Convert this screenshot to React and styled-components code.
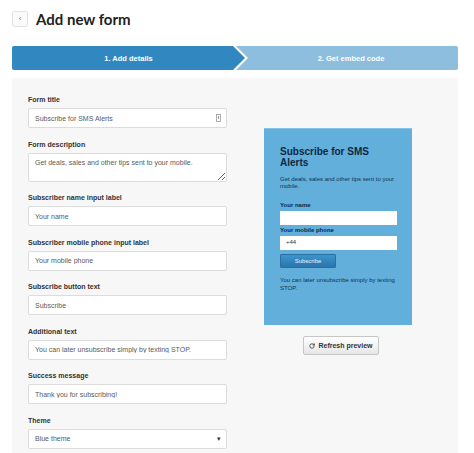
import React from "react";
import styled, { createGlobalStyle } from "styled-components";
import { RotateCw } from "lucide-react";

const GlobalStyle = createGlobalStyle`
  body {
    margin: 0;
    background: #fff;
    font-family: "Liberation Sans", Arial, sans-serif;
    overflow: hidden;
  }
`;

const Page = styled.div`
  padding: 11px 16px 0 12px;
`;

const Header = styled.div`
  display: flex;
  align-items: center;
  gap: 8px;
  height: 16px;
`;

const BackButton = styled.button`
  width: 16px;
  height: 16px;
  padding: 0;
  border: 1px solid #e2e2e2;
  border-radius: 2px;
  background: #fafafa;
  color: #777;
  font-size: 8px;
  line-height: 14px;
  font-family: "Liberation Sans", Arial, sans-serif;
`;

const Title = styled.h1`
  margin: 0;
  font-family: Lato, "Liberation Sans", sans-serif;
  font-weight: 700;
  font-size: 15px;
  line-height: 16px;
  color: #222;
`;

const Stepper = styled.div`
  display: flex;
  height: 24px;
  margin-top: 19px;
`;

const Step = styled.div`
  display: flex;
  align-items: center;
  justify-content: center;
  color: #fff;
  font-weight: 700;
  font-size: 7.5px;
  background: ${(p) => (p.$active ? "#3187bf" : "#8dbedd")};
  ${(p) =>
    p.$active
      ? `
    width: 233px;
    border-radius: 2px 0 0 2px;
    clip-path: polygon(0 0, calc(100% - 12px) 0, 100% 50%, calc(100% - 12px) 100%, 0 100%);
  `
      : `
    flex: 1;
    margin-left: -9px;
    padding-left: 8px;
    border-radius: 0 2px 2px 0;
    clip-path: polygon(0 0, 100% 0, 100% 100%, 0 100%, 12px 50%);
  `}
`;

const Panel = styled.div`
  margin-top: 8px;
  background: #f7f7f7;
  padding: 17px 16px 20px;
  display: grid;
  grid-template-columns: 199px 1fr;
`;

const FormColumn = styled.div`
  display: flex;
  flex-direction: column;
  gap: 11.5px;
`;

const Field = styled.div`
  display: flex;
  flex-direction: column;
`;

const Label = styled.label`
  display: block;
  font-size: 7px;
  font-weight: 700;
  line-height: 9px;
  color: #333;
  margin-bottom: 4px;
`;

const InputWrap = styled.div`
  position: relative;
`;

const TextInput = styled.input`
  display: block;
  box-sizing: border-box;
  width: 199px;
  height: 20px;
  margin: 0;
  border: 1px solid #dcdcdc;
  border-radius: 2px;
  padding: 0 6px;
  background: #fff;
  color: #5a5a5a;
  font-family: "Liberation Sans", Arial, sans-serif;
  font-size: 7px;
  outline: none;
`;

const TextArea = styled.textarea`
  display: block;
  box-sizing: border-box;
  width: 199px;
  height: 29px;
  margin: 0;
  border: 1px solid #dcdcdc;
  border-radius: 2px;
  padding: 5px 6px;
  background: #fff;
  color: #5a5a5a;
  font-family: "Liberation Sans", Arial, sans-serif;
  font-size: 7px;
  outline: none;
  resize: vertical;
`;

const FieldIcon = styled.svg`
  position: absolute;
  right: 6px;
  top: 6px;
`;

const SelectBox = styled.div`
  box-sizing: border-box;
  width: 199px;
  height: 20px;
  border: 1px solid #dcdcdc;
  border-radius: 2px;
  padding: 0 5px 0 6px;
  background: #fff;
  color: #5a5a5a;
  font-size: 7px;
  display: flex;
  align-items: center;
  justify-content: space-between;
`;

const Caret = styled.span`
  font-size: 7px;
  color: #333;
`;

const PreviewColumn = styled.div`
  display: flex;
  flex-direction: column;
  align-items: center;
  padding: 33px 0 0 7px;
`;

const PreviewBox = styled.div`
  box-sizing: border-box;
  width: 148px;
  height: 197px;
  background: #61afda;
  border-top: 1px solid #84c3e6;
  padding: 17px 15px 0 16px;
  color: #11304d;
`;

const PreviewTitle = styled.h2`
  margin: 0;
  font-size: 10px;
  line-height: 11px;
  font-weight: 700;
  color: #0e2842;
`;

const PreviewText = styled.p`
  margin: ${(p) => p.$mt}px 0 0;
  font-size: 6px;
  line-height: ${(p) => p.$lh}px;
  color: #14324f;
`;

const PreviewField = styled.div`
  margin-top: ${(p) => p.$mt}px;
`;

const PreviewLabel = styled.div`
  font-size: 6px;
  font-weight: 700;
  line-height: 8px;
  color: #0e2842;
  margin-bottom: 2.5px;
`;

const PreviewInput = styled.div`
  box-sizing: border-box;
  width: 117px;
  height: 13.5px;
  background: #fff;
  padding: 0 6px;
  font-size: 6px;
  line-height: 13.5px;
  color: #333;
`;

const SubscribeButton = styled.button`
  margin-top: 4.5px;
  width: 56px;
  height: 14px;
  padding: 0;
  border: 1px solid #2a6fa3;
  border-radius: 1px;
  background: linear-gradient(#3f94cc, #2a74ad);
  color: #e8f3fb;
  font-family: "Liberation Sans", Arial, sans-serif;
  font-size: 6px;
  display: block;
`;

const RefreshButton = styled.button`
  margin: 11px 0 0 6px;
  width: 76px;
  height: 19px;
  border: 1px solid #c6c6c6;
  border-radius: 2px;
  background: linear-gradient(#ffffff, #e6e6e6);
  color: #333;
  font-family: "Liberation Sans", Arial, sans-serif;
  font-size: 7px;
  font-weight: 700;
  display: flex;
  align-items: center;
  justify-content: center;
  gap: 3px;
  padding: 0;
`;

const fields = [
  { label: "Subscriber name input label", value: "Your name" },
  { label: "Subscriber mobile phone input label", value: "Your mobile phone" },
  { label: "Subscribe button text", value: "Subscribe" },
  { label: "Additional text", value: "You can later unsubscribe simply by texting STOP." },
  { label: "Success message", value: "Thank you for subscribing!" },
];

export default function App() {
  return (
    <Page>
      <GlobalStyle />
      <Header>
        <BackButton type="button">‹</BackButton>
        <Title>Add new form</Title>
      </Header>

      <Stepper>
        <Step $active>1. Add details</Step>
        <Step>2. Get embed code</Step>
      </Stepper>

      <Panel>
        <FormColumn>
          <Field>
            <Label>Form title</Label>
            <InputWrap>
              <TextInput readOnly defaultValue="Subscribe for SMS Alerts" />
              <FieldIcon width="5" height="8" viewBox="0 0 5 8">
                <rect x="0.5" y="0.5" width="4" height="7" fill="none" stroke="#999" strokeWidth="0.8" />
                <rect x="2" y="2" width="1" height="3" fill="#999" />
              </FieldIcon>
            </InputWrap>
          </Field>
          <Field>
            <Label>Form description</Label>
            <TextArea readOnly defaultValue="Get deals, sales and other tips sent to your mobile." />
          </Field>
          {fields.map((f) => (
            <Field key={f.label}>
              <Label>{f.label}</Label>
              <TextInput readOnly defaultValue={f.value} />
            </Field>
          ))}
          <Field>
            <Label>Theme</Label>
            <SelectBox>
              <span>Blue theme</span>
              <Caret>▾</Caret>
            </SelectBox>
          </Field>
        </FormColumn>

        <PreviewColumn>
          <PreviewBox>
            <PreviewTitle>Subscribe for SMS Alerts</PreviewTitle>
            <PreviewText $mt={7.5} $lh={7.5}>
              Get deals, sales and other tips sent to your mobile.
            </PreviewText>
            <PreviewField $mt={10}>
              <PreviewLabel>Your name</PreviewLabel>
              <PreviewInput />
            </PreviewField>
            <PreviewField $mt={1}>
              <PreviewLabel>Your mobile phone</PreviewLabel>
              <PreviewInput>+44</PreviewInput>
            </PreviewField>
            <SubscribeButton type="button">Subscribe</SubscribeButton>
            <PreviewText $mt={7.5} $lh={8}>
              You can later unsubscribe simply by texting STOP.
            </PreviewText>
          </PreviewBox>
          <RefreshButton type="button">
            <RotateCw size={6} strokeWidth={3} />
            Refresh preview
          </RefreshButton>
        </PreviewColumn>
      </Panel>
    </Page>
  );
}
